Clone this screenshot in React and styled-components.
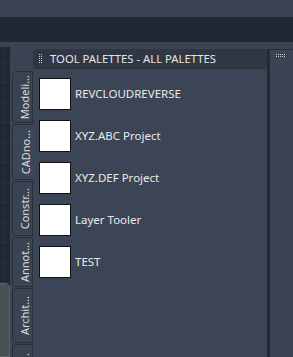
import React from 'react'
import styled, {createGlobalStyle} from 'styled-components'

const Global = createGlobalStyle`
  html, body {
    margin: 0;
    padding: 0;
    background: #3b4453;
  }
  * { box-sizing: border-box; }
`

const Screen = styled.div`
  width: 293px;
  height: 357px;
  display: flex;
  flex-direction: column;
  background: #3b4453;
  overflow: hidden;
  font-family: "Noto Sans", "Open Sans", sans-serif;
`
const TopStrip = styled.div`
  height: 17px;
  background: #3b4453;
`
const Ribbon = styled.div`
  height: 25px;
  background: #222831;
`
const Workspace = styled.div`
  flex: 1;
  display: flex;
  padding-top: 5px;
  min-height: 0;
`
const Drawing = styled.div`
  position: relative;
  width: 10px;
  background-color: #212730;
  background-image:
    linear-gradient(to bottom, #2b323c 1px, transparent 1px),
    linear-gradient(to right, #2b323c 1px, transparent 1px);
  background-size: 20px 20px;
  background-position: 0 15px, 3px 0;
`
const NavBar = styled.div`
  position: absolute;
  left: 0;
  top: 236px;
  bottom: 0;
  width: 10px;
  background: #4a4f56;
  border: 1px solid #5d626a;
  border-left: none;
  border-radius: 0 5px 0 0;
`
const PaletteWindow = styled.div`
  flex: 1;
  display: flex;
  margin-left: 2px;
`
const TabColumn = styled.div`
  width: 21px;
  padding-top: 24px;
  display: flex;
  flex-direction: column;
  gap: 1px;
`
const Tab = styled.div`
  height: ${p => p.h}px;
  flex-shrink: 0;
  display: flex;
  align-items: center;
  justify-content: center;
  padding-left: 4px;
  background: ${p => p.active ? '#3d4656' : '#3a4352'};
  border: 1px solid #2a3039;
  border-right: ${p => p.active ? 'none' : '1px solid #2a3039'};
  margin-right: ${p => p.active ? '-1px' : '0'};
  border-radius: 4px 0 0 4px;
  position: relative;
  z-index: ${p => p.active ? 2 : 1};
`
const TabLabel = styled.span`
  writing-mode: vertical-rl;
  transform: rotate(180deg);
  font-size: 11px;
  color: #d9dcdf;
  white-space: nowrap;
`
const PaletteBody = styled.div`
  width: 234px;
  padding-top: 2px;
  display: flex;
  flex-direction: column;
`
const TitleBar = styled.div`
  height: 19px;
  display: flex;
  align-items: center;
  gap: 7px;
  padding-left: 6px;
  background: #303743;
  border-radius: 4px 4px 0 0;
  color: #e4e6e8;
  font-size: 11.3px;
  white-space: nowrap;
`
const Content = styled.div`
  flex: 1;
  background: #3c4555;
  border-top: 1px solid #2a3039;
  border-radius: 0 4px 0 0;
  padding: 9px 0 0 6px;
  display: flex;
  flex-direction: column;
`
const Item = styled.div`
  height: 42px;
  display: flex;
  align-items: flex-start;
  gap: 4px;
`
const Swatch = styled.div`
  width: 32px;
  height: 32px;
  background: #ffffff;
  border: 1px solid #111;
`
const ItemLabel = styled.span`
  line-height: 32px;
  font-size: 11.5px;
  color: #e8eaec;
`
const Splitter = styled.div`
  width: 3px;
  margin-top: 2px;
  background: #252a33;
`
const SidePanel = styled.div`
  flex: 1;
  margin-top: 2px;
  background: #3b4453;
  border-top: 1px solid #2a3039;
  padding: 4px 0 0 6px;
`

const Grip = ({cols, rows}) => (
  <svg width={cols * 2} height={rows * 2} style={{display: 'block', flexShrink: 0}}>
    {Array.from({length: rows}).map((_, r) =>
      Array.from({length: cols}).map((_, c) => (
        <rect key={`${r}-${c}`} x={c * 2} y={r * 2} width="1" height="1" fill="#c9ccd0" />
      ))
    )}
  </svg>
)

const tabs = [
  {label: 'Modeli...', h: 52},
  {label: 'CADno...', h: 56, active: true},
  {label: 'Constr...', h: 55},
  {label: 'Annot...', h: 50},
  {label: 'Archit...', h: 55},
  {label: 'l...', h: 30},
]

const items = ['REVCLOUDREVERSE', 'XYZ.ABC Project', 'XYZ.DEF Project', 'Layer Tooler', 'TEST']

const App = () => {
  return (
    <Screen>
      <Global />
      <TopStrip />
      <Ribbon />
      <Workspace>
        <Drawing>
          <NavBar />
        </Drawing>
        <PaletteWindow>
          <TabColumn>
            {tabs.map(t => (
              <Tab key={t.label} h={t.h} active={t.active}>
                <TabLabel>{t.label}</TabLabel>
              </Tab>
            ))}
          </TabColumn>
          <PaletteBody>
            <TitleBar>
              <Grip cols={2} rows={5} />
              TOOL PALETTES - ALL PALETTES
            </TitleBar>
            <Content>
              {items.map(i => (
                <Item key={i}>
                  <Swatch />
                  <ItemLabel>{i}</ItemLabel>
                </Item>
              ))}
            </Content>
          </PaletteBody>
          <Splitter />
          <SidePanel>
            <Grip cols={5} rows={2} />
          </SidePanel>
        </PaletteWindow>
      </Workspace>
    </Screen>
  )
}

export default App
